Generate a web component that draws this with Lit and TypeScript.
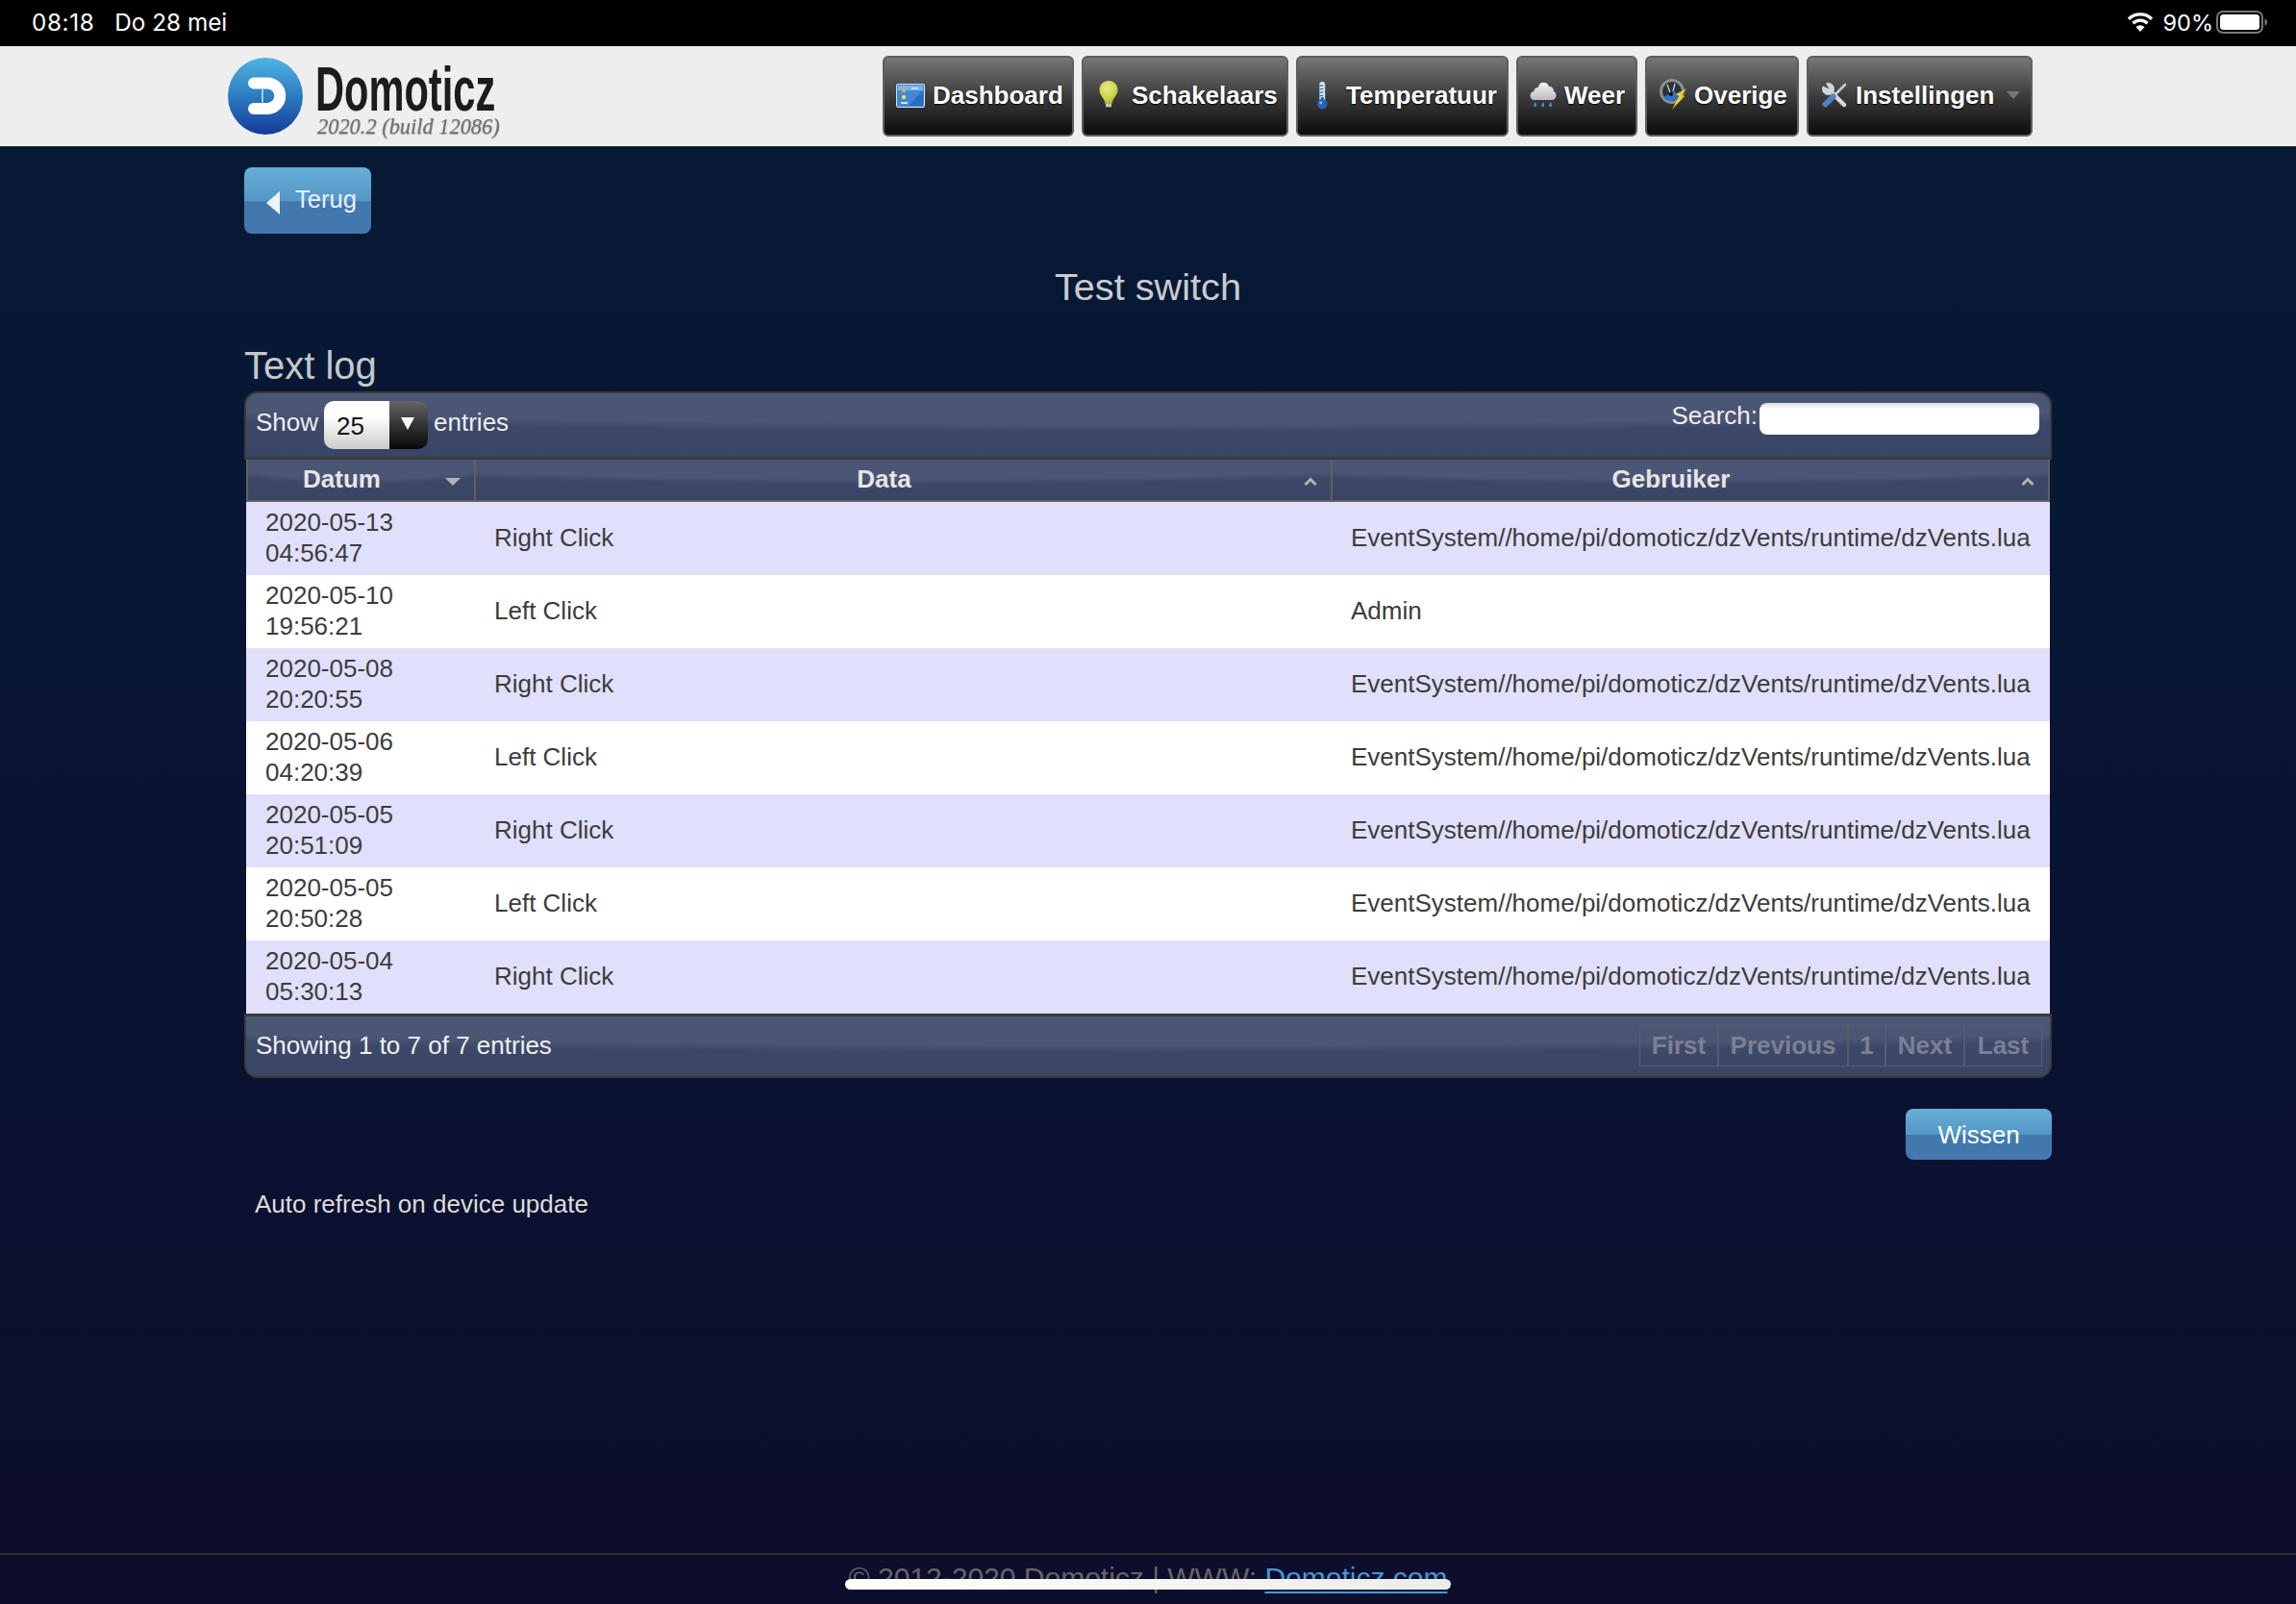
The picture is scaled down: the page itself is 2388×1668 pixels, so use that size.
import { LitElement, html, css, svg } from "lit";
import { customElement } from "lit/decorators.js";

const ROWS = [
  ["2020-05-13", "04:56:47", "Right Click", "EventSystem//home/pi/domoticz/dzVents/runtime/dzVents.lua"],
  ["2020-05-10", "19:56:21", "Left Click", "Admin"],
  ["2020-05-08", "20:20:55", "Right Click", "EventSystem//home/pi/domoticz/dzVents/runtime/dzVents.lua"],
  ["2020-05-06", "04:20:39", "Left Click", "EventSystem//home/pi/domoticz/dzVents/runtime/dzVents.lua"],
  ["2020-05-05", "20:51:09", "Right Click", "EventSystem//home/pi/domoticz/dzVents/runtime/dzVents.lua"],
  ["2020-05-05", "20:50:28", "Left Click", "EventSystem//home/pi/domoticz/dzVents/runtime/dzVents.lua"],
  ["2020-05-04", "05:30:13", "Right Click", "EventSystem//home/pi/domoticz/dzVents/runtime/dzVents.lua"],
];

const ICONS: Record<string, unknown> = {
  dash: svg`<svg width="30" height="30" viewBox="0 0 30 30"><rect x="0.5" y="3.5" width="29" height="24" rx="1.5" fill="#3f88d6" stroke="#d5e3ee"/><rect x="2" y="5" width="26" height="5" fill="#7ab4e6"/><path d="M13 26 L28 10 V26 Z" fill="#2a6cbd"/><circle cx="8" cy="10" r="2.2" fill="#d9b04a"/><circle cx="8" cy="17" r="2.2" fill="#dfe66a"/><rect x="5" y="22" width="7" height="2" fill="#cfe0ee"/><rect x="16" y="7" width="7" height="1.5" fill="#cfe4f6"/></svg>`,
  bulb: svg`<svg width="24" height="34" viewBox="0 0 24 34"><defs><radialGradient id="bl" cx=".42" cy=".3" r=".75"><stop offset="0" stop-color="#e9ec86"/><stop offset=".6" stop-color="#cdd44e"/><stop offset="1" stop-color="#a3ac2a"/></radialGradient></defs><path d="M12 2C6.500 2 2.500 6 2.500 11.500c0 5.500 5 8 6 14.500h7c1-6.500 6-9 6-14.500C21.500 6 17.500 2 12 2z" fill="url(#bl)"/><rect x="9" y="26" width="6" height="3.500" fill="#c4c4b4"/><rect x="9.500" y="29.500" width="5" height="2.500" fill="#2a2a2a"/></svg>`,
  temp: svg`<svg width="16" height="34" viewBox="0 0 16 34"><rect x="5.500" y="3" width="5.500" height="22" rx="2.700" fill="#e6eff7" stroke="#8fb4d8" stroke-width=".7"/><path d="M5.800 7h3.500M5.800 10.500h3.500M5.800 14h3.500M5.800 17.500h3.500" stroke="#3a76be" stroke-width="1.300"/><rect x="6.800" y="19" width="3" height="6" fill="#2a6cc8"/><circle cx="8.200" cy="26" r="5.300" fill="#2563bf"/><circle cx="6.800" cy="24.800" r="1.500" fill="#8fb8ea"/></svg>`,
  rain: svg`<svg width="28" height="30" viewBox="0 0 28 30"><defs><linearGradient id="cl" x1="0" y1="0" x2="0" y2="1"><stop offset="0" stop-color="#f4f4f4"/><stop offset="1" stop-color="#bdbdbd"/></linearGradient></defs><path d="M5 20C2 20 .5 18 .5 15.500S2.500 11 4.500 11C4.500 8 7 6.500 9 7c0-3 3-6 6-5 3 0 4.500 2 5 4 3 0 5 2 5 5 2 .5 2.500 2.500 2.500 4.500S26 20 23 20z" fill="url(#cl)"/><path d="M6 21.500l-1.800 4a1.700 1.700 0 0 0 3 .8zM14 21.500l-1.800 4a1.700 1.700 0 0 0 3 .8zM22 21.500l-1.800 4a1.700 1.700 0 0 0 3 .8z" fill="#3f9ad8"/></svg>`,
  gauge: svg`<svg width="30" height="36" viewBox="0 0 30 36"><circle cx="13" cy="14" r="11.500" fill="#28343e" stroke="#8b8f8f" stroke-width="3"/><path d="M3.500 20a11 11 0 0 0 16 1l-3-7-6 3z" fill="#2f6fd0"/><path d="M11 15L8 7M14 14l2-8" stroke="#d8dfc8" stroke-width="1.200"/><circle cx="12" cy="17" r="2" fill="#111"/><path d="M28 11L17 17l3 2-7 14 13-14-3-1z" fill="#e5cf3a"/></svg>`,
  tools: svg`<svg width="28" height="28" viewBox="0 0 28 28"><path d="M9 9L24 24" stroke="#d8dcdf" stroke-width="4.500" stroke-linecap="round"/><circle cx="7.500" cy="7.500" r="6.500" fill="#d0d5d8"/><path d="M8.500 7.500L4 0H0V3.500z" fill="#4a4a4a"/><path d="M25 3L14 14" stroke="#c8ced2" stroke-width="2.600" stroke-linecap="round"/><path d="M12.500 15.500L4.500 23.500" stroke="#4f83c4" stroke-width="6" stroke-linecap="round"/></svg>`,
};

@customElement("app-root")
export class AppRoot extends LitElement {
  static styles = css`
    :host {
      display: flex;
      flex-direction: column;
      position: relative;
      width: 2388px;
      height: 1668px;
      overflow: hidden;
      font-family: "Liberation Sans", Arial, sans-serif;
      font-size: 26px;
      background: linear-gradient(180deg, #071a35 0, #071a35 152px, #0a1231 1100px, #0d0d2c 100%);
    }
    .status {
      height: 48px;
      flex: none;
      background: #000;
      color: #fff;
      display: flex;
      align-items: center;
      padding: 0 29px 2px 33px;
      box-sizing: border-box;
      font-family: Inter, "Liberation Sans", sans-serif;
      font-size: 24.3px;
    }
    .status .time { letter-spacing: 0.6px; }
    .status .date { margin-left: 21px; }
    .status .right { margin-left: auto; display: flex; align-items: center; font-size: 23.5px; }
    .status .pct { margin: 0 3px 0 10px; }
    .topbar {
      height: 104px;
      flex: none;
      background: #eee;
      border-bottom: 1px solid #222;
      display: flex;
      align-items: center;
      padding-left: 237px;
    }
    .logo { flex: none; display: block; }
    .brand { width: 191px; margin-left: 13px; height: 84px; display: flex; flex-direction: column; }
    .brand .name {
      font-weight: 700;
      font-size: 64px;
      line-height: 60px;
      height: 60px;
      margin-top: 5px;
      color: #1c1c1c;
      transform: scaleX(0.65);
      transform-origin: 0 0;
      width: 190px;
      white-space: nowrap;
    }
    .brand .ver {
      font-family: "Liberation Serif", serif;
      font-style: italic;
      font-size: 22.4px;
      line-height: 24px;
      margin-top: -3px;
      color: #6e6e6e;
      white-space: nowrap;
      text-shadow: 0 1px 1px #aaa;
      margin-left: 2px;
    }
    nav { display: flex; gap: 8px; margin-left: 399px; align-self: flex-start; margin-top: 10px; }
    .nav {
      box-sizing: border-box;
      height: 84px;
      display: flex;
      align-items: center;
      border: 2px solid #5e5e5e;
      border-radius: 6px;
      padding-bottom: 2px;
      background: linear-gradient(180deg, #777 0, #3c3c3c 50%, #0c0c0c 100%);
      color: #fff;
      font-weight: 700;
      font-size: 26px;
      text-shadow: 0 1px 2px #000;
      white-space: nowrap;
    }
    .nav svg { flex: none; }
    .nav .ic { display: flex; justify-content: center; flex: none; }
    .caret { width: 0; height: 0; border-left: 7px solid transparent; border-right: 7px solid transparent; border-top: 8px solid #777; margin-left: 13px; }
    main { display: flex; flex-direction: column; flex: 1; padding: 21px 254px 0 254px; min-height: 0; }
    .btn {
      box-sizing: border-box;
      display: flex;
      align-items: center;
      border-radius: 8px;
      color: #fff;
      background: linear-gradient(180deg, #68aed6 0, #5398c6 50%, #4279ad 52%, #4378af 100%);
    }
    .back { width: 132px; height: 69px; padding-left: 23px; font-size: 25.6px; gap: 16px; color: #eef; padding-bottom: 2px; }
    .back i { width: 0; height: 0; border-top: 12px solid transparent; border-bottom: 12px solid transparent; border-right: 14px solid #e8f6ff; margin-top: 6px; }
    h1 { margin: 32px 0 0; font-weight: 400; font-size: 39.7px; line-height: 46px; color: #c8ccd0; text-align: center; }
    h2 { margin: 36px 0 0; font-weight: 400; font-size: 40px; line-height: 46px; color: #c4c8cc; }
    .panel {
      box-sizing: border-box;
      width: 1880px;
      margin-top: 4px;
      display: flex;
      flex-direction: column;
    }
    .gloss {
      background:
        radial-gradient(ellipse 100% 120% at 50% -60%, rgba(75, 85, 116, 1) 90%, rgba(75, 85, 116, 0) 100%),
        linear-gradient(180deg, #414c6c 0, #3a4565 100%);
    }
    .tools {
      box-sizing: border-box;
      height: 71px;
      border: 2px solid #3a3a3a;
      border-bottom-width: 3px;
      border-radius: 14px 14px 0 0;
      display: flex;
      align-items: center;
      padding: 0 11px 0 10px;
      color: #eee;
    }
    .tools .lbl { padding-bottom: 6px; }
    .sel {
      box-sizing: border-box;
      width: 108px;
      height: 50px;
      margin: 0 6px;
      display: flex;
      border-radius: 10px;
      overflow: hidden;
      color: #111;
      flex: none;
    }
    .sel .v { flex: 1; background: linear-gradient(180deg, #fff 30%, #ccc); display: flex; align-items: center; padding: 2px 0 0 13px; }
    .sel .a { width: 40px; background: linear-gradient(180deg, #666, #333 50%, #080808); display: flex; justify-content: center; padding: 17px 2px 0 0; box-sizing: border-box; }
    .sel .a i { width: 0; height: 0; border-left: 7px solid transparent; border-right: 7px solid transparent; border-top: 13px solid #fff; }
    .search { margin-left: auto; display: flex; align-items: center; gap: 2px; margin-top: -13px; }
    .search .inp { width: 291px; height: 33px; border-radius: 8px; background: linear-gradient(180deg, #ddd 0, #fff 20%); }
    .grid { width: 1876px; margin-left: 2px; display: grid; grid-template-columns: 239px 891px 746px; color: #3c3c3c; }
    .th {
      box-sizing: border-box;
      height: 44px;
      border-bottom: 2px solid #5f6066;
      border-right: 2px solid #5f6066;
      font-weight: 700;
      color: #e6e6e6;
      display: flex;
      align-items: center;
      justify-content: center;
      position: relative;
      padding: 0 40px 2px 0;
    }
    .th.first { border-left: 2px solid #5f6066; }
    .th .sort { position: absolute; right: 14px; top: 19px; width: 0; height: 0; border-left: 8px solid transparent; border-right: 8px solid transparent; border-top: 8px solid #b4b4b4; }
    .th svg { position: absolute; right: 14px; top: 18px; }
    .td { height: 76px; box-sizing: border-box; padding: 0 0 2px 19px; display: flex; align-items: center; line-height: 32px; white-space: nowrap; background: #fff; }
    .td.d { padding-left: 20px; }
    .odd { background: #e0e0fd; }
    .foot {
      box-sizing: border-box;
      height: 67px;
      border: 2px solid #3a3a3a;
      border-top-width: 3px;
      border-radius: 0 0 14px 14px;
      display: flex;
      align-items: center;
      padding: 0 8px 2px 10px;
      color: #f0f0f0;
    }
    .pages { margin-left: auto; display: flex; border: 1px solid #555c70; }
    .pages span { box-sizing: border-box; height: 42px; display: flex; align-items: center; justify-content: center; font-weight: 700; color: #7b8094; border-right: 2px solid #555c70; }
    .pages span:last-child { border-right: 0; }
    .actions { display: flex; justify-content: flex-end; margin-top: 32px; }
    .wipe { width: 152px; height: 53px; justify-content: center; padding-top: 2px; }
    .auto { margin: 31px 0 0 11px; color: #dcdcdc; line-height: 30px; }
    footer {
      position: absolute;
      left: 0;
      right: 0;
      top: 1615px;
      height: 53px;
      box-sizing: border-box;
      border-top: 2px solid #33332c;
      text-align: center;
      color: #666;
      font-size: 30px;
      line-height: 30px;
      padding-top: 9px;
    }
    footer a { color: #4a96cf; text-decoration: underline; text-decoration-thickness: 2px; text-underline-offset: 4px; }
    .home { position: absolute; left: 879px; top: 1642px; width: 630px; height: 11px; border-radius: 6px; background: linear-gradient(90deg, #fff, #ececec); }
  `;

  private nav(icon: string, label: string, width: number, icW: number, gap: number, left: number, caret = false) {
    return html`<div class="nav" style="width:${width}px;padding-left:${left}px">
      <span class="ic" style="width:${icW}px;margin-right:${gap}px">${ICONS[icon]}</span>${label}${caret ? html`<i class="caret"></i>` : ""}
    </div>`;
  }

  private up() {
    return svg`<svg width="14" height="9" viewBox="0 0 14 9"><path d="M1.500 8L7 2.500 12.500 8" fill="none" stroke="#b4b4b4" stroke-width="3"/></svg>`;
  }

  render() {
    return html`
      <div class="status">
        <span class="time">08:18</span><span class="date">Do 28 mei</span>
        <div class="right">
          <svg width="28" height="20" viewBox="0 0 28 20"><path d="M14 20l-4.500-5a6.500 6.500 0 0 1 9 0z" fill="#fff"/><path d="M6.500 11.200a10.800 10.800 0 0 1 15 0M2 6.800a17.200 17.200 0 0 1 24 0" fill="none" stroke="#fff" stroke-width="3.400"/></svg>
          <span class="pct">90%</span>
          <svg width="54" height="24" viewBox="0 0 54 24"><rect x="1" y="1" width="47" height="22" rx="6" fill="none" stroke="#777" stroke-width="2"/><rect x="4" y="4" width="41" height="16" rx="3.500" fill="#fff"/><path d="M50.500 8.500c2 .5 2.500 2 2.500 3.500s-.5 3-2.500 3.500z" fill="#777"/></svg>
        </div>
      </div>
      <div class="topbar">
        <svg class="logo" width="78" height="80" viewBox="0 0 78 80">
          <defs><linearGradient id="lg" x1="0" y1="0" x2="0" y2="1"><stop offset="0" stop-color="#4fb4e2"/><stop offset=".5" stop-color="#2b7cc2"/><stop offset="1" stop-color="#173a98"/></linearGradient></defs>
          <ellipse cx="39" cy="40" rx="39" ry="40" fill="url(#lg)"/>
          <path d="M27 26.500H41a13.200 13.200 0 0 1 0 26.400H27" fill="none" stroke="#fff" stroke-width="12" stroke-linecap="round"/>
          <rect x="35" y="33" width="2" height="13.500" fill="#fff" opacity=".6"/>
        </svg>
        <div class="brand">
          <div class="name">Domoticz</div>
          <div class="ver">2020.2 (build 12086)</div>
        </div>
        <nav>
          ${this.nav("dash", "Dashboard", 199, 30, 8, 12)}
          ${this.nav("bulb", "Schakelaars", 215, 30, 9, 11)}
          ${this.nav("temp", "Temperatuur", 221, 30, 10, 10)}
          ${this.nav("rain", "Weer", 126, 30, 7, 11)}
          ${this.nav("gauge", "Overige", 160, 32, 5, 12)}
          ${this.nav("tools", "Instellingen", 235, 30, 7, 12, true)}
        </nav>
      </div>
      <main>
        <div class="btn back"><i></i><span>Terug</span></div>
        <h1>Test switch</h1>
        <h2>Text log</h2>
        <div class="panel">
          <div class="tools gloss">
            <span class="lbl">Show</span>
            <div class="sel"><div class="v">25</div><div class="a"><i></i></div></div>
            <span class="lbl">entries</span>
            <div class="search"><span class="lbl">Search:</span><div class="inp"></div></div>
          </div>
          <div class="grid">
            <div class="th first gloss">Datum<i class="sort"></i></div>
            <div class="th gloss">Data${this.up()}</div>
            <div class="th gloss">Gebruiker${this.up()}</div>
            ${ROWS.map((r, i) => html`
              <div class="td d ${i % 2 ? "" : "odd"}"><div>${r[0]}<br />${r[1]}</div></div>
              <div class="td ${i % 2 ? "" : "odd"}">${r[2]}</div>
              <div class="td ${i % 2 ? "" : "odd"}">${r[3]}</div>`)}
          </div>
          <div class="foot gloss">
            <span>Showing 1 to 7 of 7 entries</span>
            <div class="pages">
              <span style="width:82px">First</span><span style="width:135px">Previous</span><span style="width:39px">1</span><span style="width:82px">Next</span><span style="width:79px">Last</span>
            </div>
          </div>
        </div>
        <div class="actions"><div class="btn wipe">Wissen</div></div>
        <div class="auto">Auto refresh on device update</div>
      </main>
      <footer>© 2012-2020 Domoticz | WWW: <a>Domoticz.com</a></footer>
      <div class="home"></div>
    `;
  }
}
